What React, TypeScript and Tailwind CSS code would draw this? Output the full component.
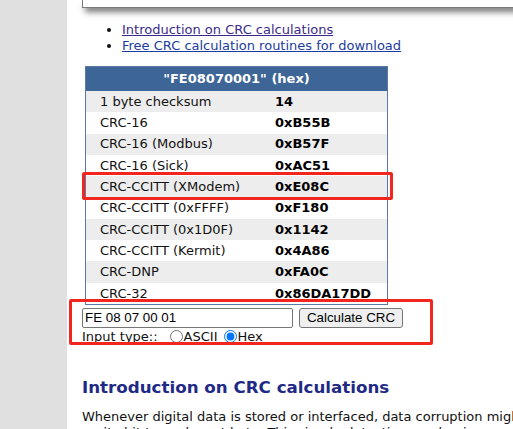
import React from "react";

const rows: [string, string][] = [
  ["1 byte checksum", "14"],
  ["CRC-16", "0xB55B"],
  ["CRC-16 (Modbus)", "0xB57F"],
  ["CRC-16 (Sick)", "0xAC51"],
  ["CRC-CCITT (XModem)", "0xE08C"],
  ["CRC-CCITT (0xFFFF)", "0xF180"],
  ["CRC-CCITT (0x1D0F)", "0x1142"],
  ["CRC-CCITT (Kermit)", "0x4A86"],
  ["CRC-DNP", "0xFA0C"],
  ["CRC-32", "0x86DA17DD"],
];

export default function App() {
  return (
    <div className="relative w-[513px] h-[429px] overflow-hidden flex bg-white font-['DejaVu_Sans',sans-serif] text-[13px] text-[#111]">
      <div className="w-[67px] shrink-0 bg-[#e0e0e0]" />
      <div className="flex-1 flex flex-col pl-[15px] min-w-0">
        <div className="h-[8px] w-[480px] shrink-0 border-l border-b border-[#7a7a7a] bg-white shadow-[3px_4px_6px_rgba(0,0,0,0.55)]" />
        <ul className="mt-[14px] list-disc pl-[40px] leading-[16px]">
          <li>
            <a className="underline text-[#3b2a8c]">Introduction on CRC calculations</a>
          </li>
          <li>
            <a className="underline text-[#1b3c9e]">Free CRC calculation routines for download</a>
          </li>
        </ul>
        <div className="mt-[12px] ml-[3px] w-[303px] border border-[#5a79a8]">
          <div className="h-[24px] bg-[#3d6596] text-white font-bold flex items-center justify-center">
            "FE08070001" (hex)
          </div>
          {rows.map(([label, value], i) => (
            <div
              key={label}
              className={`h-[21.3px] flex items-center ${i % 2 === 0 ? "bg-[#ededed]" : "bg-white"}`}
            >
              <div className="w-[189px] pl-[14px] whitespace-nowrap">{label}</div>
              <div className="font-bold text-black whitespace-nowrap">{value}</div>
            </div>
          ))}
        </div>
        <div className="mt-[3px] flex items-center gap-[6px] font-['Liberation_Sans',Arial,sans-serif] text-[13.33px]">
          <input
            readOnly
            value="FE 08 07 00 01"
            className="w-[211px] h-[20px] border border-[#767676] rounded-[2px] px-[2px] text-black bg-white outline-none"
          />
          <button className="w-[104px] h-[20px] border border-[#767676] rounded-[3px] bg-[#efefef] text-black leading-none">
            Calculate CRC
          </button>
        </div>
        <div className="mt-[1px] h-[16px] flex items-center whitespace-nowrap">
          <span>Input type::</span>
          <input type="radio" name="t" readOnly className="ml-[12px] mr-[1px] w-[13px] h-[13px] accent-[#0075ff]" />
          <span>ASCII</span>
          <input type="radio" name="t" readOnly checked className="ml-[6px] mr-[1px] w-[13px] h-[13px] accent-[#0075ff]" />
          <span>Hex</span>
        </div>
        <h2 className="mt-[32px] text-[16.7px] leading-[20px] font-bold text-[#1f2a86] whitespace-nowrap">
          Introduction on CRC calculations
        </h2>
        <p className="mt-[12px] leading-[16px] whitespace-nowrap">
          Whenever digital data is stored or interfaced, data corruption might occur. Since the beginning of computer science,
          <br />
          parity bit to each sent byte. This simple detection mechanism works if an odd number of bits in a byte changes,
        </p>
      </div>
      <div className="absolute left-[82px] top-[172px] w-[311px] h-[28px] border-[3px] border-[#f0261f] rounded-[2px]" />
      <div className="absolute left-[69px] top-[299px] w-[364px] h-[46px] border-[3px] border-[#f0261f] rounded-[2px]" />
    </div>
  );
}
